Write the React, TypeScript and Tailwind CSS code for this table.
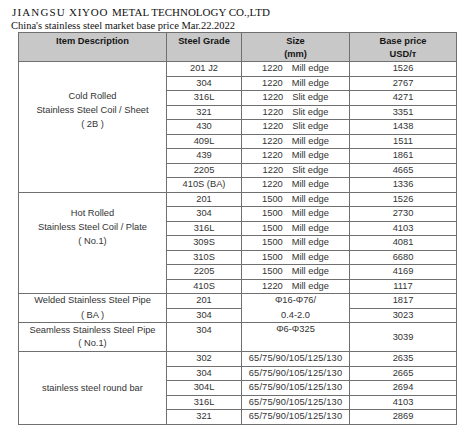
import React from "react";

type Row = [string, string, string, string];

const cold: Row[] = [
  ["201 J2", "1220", "Mill edge", "1526"],
  ["304", "1220", "Mill edge", "2767"],
  ["316L", "1220", "Slit edge", "4271"],
  ["321", "1220", "Slit edge", "3351"],
  ["430", "1220", "Slit edge", "1438"],
  ["409L", "1220", "Mill edge", "1511"],
  ["439", "1220", "Mill edge", "1861"],
  ["2205", "1220", "Slit edge", "4665"],
  ["410S (BA)", "1220", "Mill edge", "1336"],
];

const hot: Row[] = [
  ["201", "1500", "Mill edge", "1526"],
  ["304", "1500", "Mill edge", "2730"],
  ["316L", "1500", "Mill edge", "4103"],
  ["309S", "1500", "Mill edge", "4081"],
  ["310S", "1500", "Mill edge", "6680"],
  ["2205", "1500", "Mill edge", "4169"],
  ["410S", "1220", "Mill edge", "1117"],
];

const bars: [string, string][] = [
  ["302", "2635"],
  ["304", "2665"],
  ["304L", "2694"],
  ["316L", "4103"],
  ["321", "2869"],
];

const cell = "bg-white flex items-center justify-center leading-[13.5px] whitespace-nowrap";

function SizeCell({ w, e }: { w: string; e: string }) {
  return (
    <div className={cell}>
      <span>{w}</span>
      <span className="ml-[9px]">{e}</span>
    </div>
  );
}

function Rows({ rows }: { rows: Row[] }) {
  return (
    <>
      {rows.map((r, i) => (
        <React.Fragment key={i}>
          {i > 0 && null}
          <div className={cell}>{r[0]}</div>
          <SizeCell w={r[1]} e={r[2]} />
          <div className={cell}>{r[3]}</div>
        </React.Fragment>
      ))}
    </>
  );
}

export default function App() {
  return (
    <div className="w-[474px] h-[435px] bg-white overflow-hidden">
      <div className="pt-[5px] font-['Liberation_Serif','Times_New_Roman',serif] text-[#111]">
        <div className="pl-[12px] text-[11px] leading-[14px] whitespace-nowrap">
          <span className="tracking-[1.15px]">JIANGSU</span>
          <span className="inline-block w-[3px]" />
          <span className="tracking-[0.8px]">XIYOO</span>
          <span className="inline-block w-[1px]" /> METAL TECHNOLOGY CO.,LTD
        </div>
        <div className="pl-[11px] text-[10.5px] leading-[13px] whitespace-nowrap">
          China's stainless steel market base price Mar.22.2022
        </div>
      </div>

      <div className="ml-[18px] w-[439px] grid grid-cols-[147px_74px_107px_106px] grid-rows-[28px_repeat(25,13.5px)] gap-px p-px bg-[#707070] font-['Liberation_Sans',Arial,sans-serif] text-[9.3px] text-[#333]">
        {/* header */}
        <div className="bg-[#c8c8c8] flex flex-col items-center pt-[2px] leading-[13px] font-bold text-[#151515]">
          Item Description
        </div>
        <div className="bg-[#c8c8c8] flex flex-col items-center pt-[2px] leading-[13px] font-bold text-[#151515]">
          Steel Grade
        </div>
        <div className="bg-[#c8c8c8] flex flex-col items-center pt-[2px] leading-[13px] font-bold text-[#151515]">
          <span>Size</span>
          <span>(mm)</span>
        </div>
        <div className="bg-[#c8c8c8] flex flex-col items-center pt-[2px] leading-[13px] font-bold text-[#151515]">
          <span>Base price</span>
          <span>USD/т</span>
        </div>

        {/* cold rolled */}
        <div className="row-span-9 bg-white flex flex-col items-center pt-[27px] leading-[14px] whitespace-nowrap">
          <span>Cold Rolled</span>
          <span>Stainless Steel Coil / Sheet</span>
          <span>( 2B )</span>
        </div>
        <Rows rows={cold} />

        {/* hot rolled */}
        <div className="row-span-7 bg-white flex flex-col items-center pt-[13px] leading-[14.3px] whitespace-nowrap">
          <span>Hot Rolled</span>
          <span>Stainless Steel Coil / Plate</span>
          <span>( No.1)</span>
        </div>
        <Rows rows={hot} />

        {/* welded */}
        <div className="row-span-2 bg-white flex flex-col items-center justify-center leading-[14.6px] whitespace-nowrap">
          <span>Welded Stainless Steel Pipe</span>
          <span>( BA )</span>
        </div>
        <div className={cell}>201</div>
        <div className="row-span-2 bg-white flex flex-col items-center justify-center leading-[14.6px] whitespace-nowrap">
          <span>Φ16-Φ76/</span>
          <span>0.4-2.0</span>
        </div>
        <div className={cell}>1817</div>
        <div className={cell}>304</div>
        <div className={cell}>3023</div>

        {/* seamless */}
        <div className="row-span-2 bg-white flex flex-col items-center justify-center leading-[12.6px] whitespace-nowrap">
          <span>Seamless Stainless Steel Pipe</span>
          <span>( No.1)</span>
        </div>
        <div className="row-span-2 bg-white flex flex-col items-center pt-[0.5px] leading-[13px]">304</div>
        <div className="row-span-2 bg-white flex flex-col items-center pt-[0px] leading-[13px]">Φ6-Φ325</div>
        <div className="row-span-2 bg-white flex items-center justify-center leading-[13px]">3039</div>

        {/* round bar */}
        <div className="row-span-5 bg-white flex items-center justify-center leading-[14px] whitespace-nowrap">
          stainless steel round bar
        </div>
        {bars.map((b, i) => (
          <React.Fragment key={i}>
            <div className={cell}>{b[0]}</div>
            <div className={cell + " tracking-[0.15px]"}>65/75/90/105/125/130</div>
            <div className={cell}>{b[1]}</div>
          </React.Fragment>
        ))}
      </div>
    </div>
  );
}
